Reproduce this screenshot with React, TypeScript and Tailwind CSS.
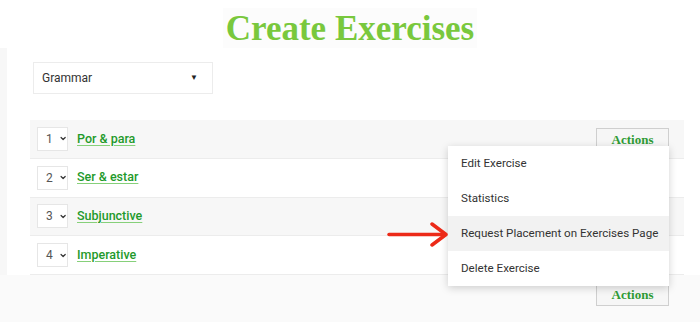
import { ChevronDown } from "lucide-react";

const rows = [
  { n: 1, title: "Por & para" },
  { n: 2, title: "Ser & estar" },
  { n: 3, title: "Subjunctive" },
  { n: 4, title: "Imperative" },
];

const menu = [
  "Edit Exercise",
  "Statistics",
  "Request Placement on Exercises Page",
  "Delete Exercise",
];

const ActionsBtn = () => (
  <button className="w-[73px] h-[23px] bg-[#f6f6f6] border border-[#cfcfcf] text-[13px] font-bold text-[#2f9b35] font-['Liberation_Serif',serif] leading-none">
    Actions
  </button>
);

export default function App() {
  return (
    <div className="relative w-[700px] h-[322px] overflow-hidden bg-white font-['Roboto',sans-serif]">
      {/* Header */}
      <div className="h-[48px] flex justify-center items-end">
        <div className="h-[40px] px-[3px] bg-[#fcfcfc] flex items-center">
          <h1 className="text-[35px] font-bold text-[#79c83d] font-['Liberation_Serif',serif] leading-none">
            Create Exercises
          </h1>
        </div>
      </div>

      {/* Body */}
      <div className="flex h-[227px]">
        <div className="w-[7px] bg-[#f7f7f7]" />
        <div className="flex-1 pl-[23px] pr-[16px]">
          {/* Category select */}
          <div className="mt-[14px] w-[180px] h-[32px] ml-[3px] border border-[#ececec] flex items-center justify-between pl-[8px] pr-[14px] text-[12px] text-[#333]">
            <span>Grammar</span>
            <span className="text-[8px] text-[#222]">▼</span>
          </div>

          {/* Rows */}
          <div className="mt-[26px]">
            {rows.map((r, i) => (
              <div
                key={r.n}
                className={`h-[38.75px] flex items-center pl-[7px] pr-[15px] border-b border-[#ececec] ${
                  i % 2 === 0 ? "bg-[#f7f7f7]" : "bg-white"
                }`}
              >
                <div className="w-[31px] h-[24px] bg-white border border-[#e6e6e6] flex items-center pl-[8px] gap-[6px] text-[12px] text-[#555]">
                  <span>{r.n}</span>
                  <ChevronDown size={9} strokeWidth={3.5} className="text-[#333]" />
                </div>
                <a
                  href="#"
                  className="ml-[9px] text-[12.5px] font-medium text-[#1f9a2b] underline decoration-[#86d07a] underline-offset-2"
                >
                  {r.title}
                </a>
                <div className="ml-auto">
                  <ActionsBtn />
                </div>
              </div>
            ))}
          </div>
        </div>
      </div>

      {/* Bottom strip */}
      <div className="h-[47px] bg-[#fafafa] flex justify-end pr-[31px] pt-[8px]">
        <ActionsBtn />
      </div>

      {/* Dropdown menu */}
      <div className="absolute left-[448px] top-[146px] w-[221px] bg-white shadow-[0_2px_8px_rgba(0,0,0,0.18)] text-[11.6px] text-[#333]">
        {menu.map((m, i) => (
          <div
            key={m}
            className={`h-[35px] flex items-center pl-[13px] ${i === 2 ? "bg-[#f2f2f2]" : ""}`}
          >
            {m}
          </div>
        ))}
      </div>

      {/* Red arrow */}
      <svg
        className="absolute left-[386px] top-[222px]"
        width="64"
        height="26"
        viewBox="0 0 64 26"
      >
        <path d="M3 12.5 H58" stroke="#ec2a18" strokeWidth="3.5" strokeLinecap="round" />
        <path d="M46 2 L60 12.5 L46 23" stroke="#ec2a18" strokeWidth="3.5" fill="none" strokeLinecap="round" strokeLinejoin="round" />
      </svg>
    </div>
  );
}
